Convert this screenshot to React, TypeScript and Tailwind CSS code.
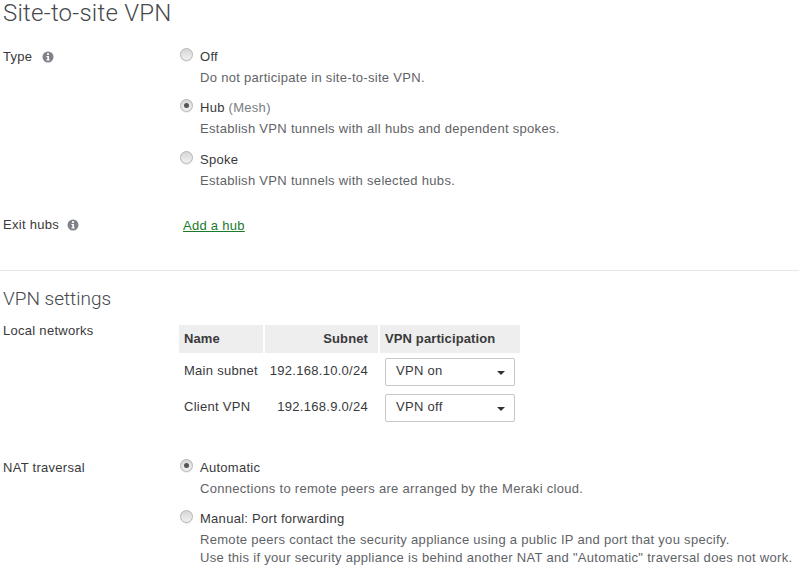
const font = "font-['Liberation_Sans',Arial,sans-serif]";

function InfoIcon() {
  return (
    <svg width="12" height="12" viewBox="0 0 12 12" className="block">
      <circle cx="6" cy="6" r="5.5" fill="#7f8389" />
      <rect x="5" y="2.2" width="2" height="1.7" fill="#fff" />
      <path d="M4.4 5h2.6v3.4h.8v1H4.4v-1h.9V6h-.9z" fill="#fff" />
    </svg>
  );
}

function Radio({ checked }: { checked?: boolean }) {
  return (
    <span className="flex h-[13px] w-[13px] shrink-0 items-center justify-center rounded-full border border-[#b4b4b4] bg-gradient-to-b from-[#d6d6d6] to-[#f2f2f2] shadow-[0_1px_1px_rgba(0,0,0,0.08)]">
      {checked && <span className="h-[5px] w-[5px] rounded-full bg-[#555]" />}
    </span>
  );
}

function Option({
  label,
  note,
  checked,
  lines,
  className,
}: {
  label: string;
  note?: string;
  checked?: boolean;
  lines: string[];
  className?: string;
}) {
  return (
    <div className={`flex ${className ?? ""}`}>
      <div className="w-[21px] shrink-0 pl-px">
        <Radio checked={checked} />
      </div>
      <div>
        <div className="h-[18px] leading-[18px] text-[#39393b]">
          {label}
          {note && <span className="text-[#7a7d80]"> {note}</span>}
        </div>
        <div className="mt-[3px] tracking-[0.3px] text-[#5f6367]">
          {lines.map((line) => (
            <div key={line} className="h-[18px] whitespace-nowrap leading-[18px]">
              {line}
            </div>
          ))}
        </div>
      </div>
    </div>
  );
}

function VpnSelect({ value }: { value: string }) {
  return (
    <div className="flex h-[28px] w-[130px] items-center justify-between rounded-[2px] border border-[#c8c8c8] bg-white pl-[10px] pr-[9px] text-[#39393b]">
      <span className="pb-[2px]">{value}</span>
      <span className="mt-[2px] h-0 w-0 border-x-[4px] border-t-[4px] border-x-transparent border-t-[#333]" />
    </div>
  );
}

export default function App() {
  return (
    <div className={`${font} h-[582px] w-[799px] overflow-hidden bg-white text-[13px] tracking-[0.28px] text-[#39393b]`}>
      <h1 className="pl-[3px] font-['Roboto',sans-serif] text-[24px] font-light leading-[26px] tracking-[0.25px] text-[#45484c]">
        Site-to-site VPN
      </h1>

      <div className="mt-[22px] flex">
        <div className="flex w-[179px] shrink-0 items-center gap-[10px] self-start pl-[3px] leading-[18px]">
          Type <InfoIcon />
        </div>
        <div>
          <Option label="Off" lines={["Do not participate in site-to-site VPN."]} />
          <Option
            className="mt-[12px]"
            label="Hub"
            note="(Mesh)"
            checked
            lines={["Establish VPN tunnels with all hubs and dependent spokes."]}
          />
          <Option
            className="mt-[13px]"
            label="Spoke"
            lines={["Establish VPN tunnels with selected hubs."]}
          />
        </div>
      </div>

      <div className="mt-[26px] flex">
        <div className="flex w-[183px] shrink-0 items-center gap-[8px] self-start pl-[3px] leading-[18px]">
          Exit hubs <InfoIcon />
        </div>
        <a className="mt-px leading-[18px] text-[#1a7a2a] underline">Add a hub</a>
      </div>

      <div className="mt-[35px] h-px bg-[#e8e8e8]" />

      <h2 className="mt-[17px] pl-[3px] font-['Roboto',sans-serif] text-[19px] font-light leading-[22px] tracking-normal text-[#45484c]">
        VPN settings
      </h2>

      <div className="mt-[13px] flex">
        <div className="w-[179px] shrink-0 pl-[3px] leading-[16px]">Local networks</div>
        <table className="mt-[2px] w-[341px] table-fixed border-separate border-spacing-0">
          <thead>
            <tr className="h-[28px] font-bold tracking-[0.12px]">
              <th className="w-[86px] border-r-2 border-white bg-[#eeeeee] pl-[5px] text-left">Name</th>
              <th className="w-[115px] border-r-2 border-white bg-[#eeeeee] pr-[10px] text-right">Subnet</th>
              <th className="w-[140px] bg-[#eeeeee] pl-[5px] text-left">VPN participation</th>
            </tr>
          </thead>
          <tbody>
            <tr className="h-[36px] leading-[18px]">
              <td className="whitespace-nowrap pl-[5px] pt-[9px] align-top">Main subnet</td>
              <td className="pr-[12px] pt-[9px] text-right align-top">192.168.10.0/24</td>
              <td className="pl-[5px] pt-[5px] align-top">
                <VpnSelect value="VPN on" />
              </td>
            </tr>
            <tr className="h-[36px] leading-[18px]">
              <td className="whitespace-nowrap pl-[5px] pt-[9px] align-top">Client VPN</td>
              <td className="pr-[12px] pt-[9px] text-right align-top">192.168.9.0/24</td>
              <td className="pl-[5px] pt-[5px] align-top">
                <VpnSelect value="VPN off" />
              </td>
            </tr>
          </tbody>
        </table>
      </div>

      <div className="mt-[34px] flex">
        <div className="w-[179px] shrink-0 pl-[3px] leading-[18px]">NAT traversal</div>
        <div>
          <Option
            label="Automatic"
            checked
            lines={["Connections to remote peers are arranged by the Meraki cloud."]}
          />
          <Option
            className="mt-[12px]"
            label="Manual: Port forwarding"
            lines={[
              "Remote peers contact the security appliance using a public IP and port that you specify.",
              'Use this if your security appliance is behind another NAT and "Automatic" traversal does not work.',
            ]}
          />
        </div>
      </div>
    </div>
  );
}
